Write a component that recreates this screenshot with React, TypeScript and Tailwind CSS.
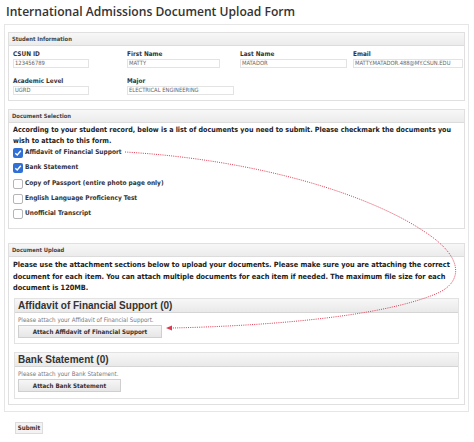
import React from 'react';

const body = { fontFamily: '"DejaVu Sans Condensed", "Liberation Sans", Verdana, sans-serif' };

const fields = [
  [
    { label: 'CSUN ID', value: '123456789', w: 'w-[76px]' },
    { label: 'First Name', value: 'MATTY', w: 'w-[93px]' },
    { label: 'Last Name', value: 'MATADOR', w: 'w-[107px]' },
    { label: 'Email', value: 'MATTY.MATADOR.488@MY.CSUN.EDU', w: 'w-[110px]' },
  ],
  [
    { label: 'Academic Level', value: 'UGRD', w: 'w-[76px]' },
    { label: 'Major', value: 'ELECTRICAL ENGINEERING', w: 'w-[107px]' },
  ],
];

const docs = [
  { name: 'Affidavit of Financial Support', checked: true },
  { name: 'Bank Statement', checked: true },
  { name: 'Copy of Passport (entire photo page only)', checked: false },
  { name: 'English Language Proficiency Test', checked: false },
  { name: 'Unofficial Transcript', checked: false },
];

const SectionHeader = ({ title }: { title: string }) => (
  <div className="h-[13px] flex items-center pl-[3px] bg-gradient-to-b from-[#f7f7f7] to-[#ececec] border-b border-[#dcdcdc] text-[5.8px] font-bold text-[#444]">
    {title}
  </div>
);

const Checkbox = ({ checked }: { checked: boolean }) =>
  checked ? (
    <div className="w-[10px] h-[10px] rounded-[2px] bg-[#2f6fd6] flex items-center justify-center shrink-0">
      <svg width="8" height="8" viewBox="0 0 8 8">
        <path d="M1.3 4.2 L3.2 6 L6.8 1.8" stroke="white" strokeWidth="1.4" fill="none" />
      </svg>
    </div>
  ) : (
    <div className="w-[10px] h-[10px] rounded-[2px] bg-white border border-[#b5b5b5] shrink-0" />
  );

const UploadBox = ({
  title,
  text,
  button,
  btnW,
  pb,
}: {
  title: string;
  text: string;
  button: string;
  btnW: string;
  pb: string;
}) => (
  <div className="border border-[#e2e2e2] mx-[5px]">
    <div
      className="h-[14px] flex items-center pl-[3px] bg-gradient-to-b from-[#f7f7f7] to-[#e9e9e9] border-b border-[#d5d5d5] text-[10px] font-bold text-[#333]"
      style={{ fontFamily: '"Liberation Sans", Arial, sans-serif' }}
    >
      {title}
    </div>
    <div className={`px-[3px] pt-[2px] ${pb}`}>
      <div className="text-[6.2px] text-[#777] leading-[9px]">{text}</div>
      <div
        className={`${btnW} h-[13px] mt-[1px] flex items-center justify-center bg-gradient-to-b from-[#f6f6f6] to-[#e6e6e6] border border-[#cfcfcf] text-[6.2px] font-bold text-[#333]`}
      >
        {button}
      </div>
    </div>
  </div>
);

export default function App() {
  return (
    <div className="relative w-[474px] h-[442px] bg-white overflow-hidden" style={body}>
      <h1
        className="pl-[6px] pt-[4px] h-[24px] text-[12.1px] font-semibold text-[#333] leading-[16px]"
        style={{ fontFamily: '"Open Sans", sans-serif' }}
      >
        International Admissions Document Upload Form
      </h1>

      <div className="mx-[4px] w-[465px] border border-[#e6e6e6] px-[3px] pt-[7px] pb-[6px] flex flex-col">
        {/* Student information */}
        <div className="border border-[#e0e0e0]">
          <SectionHeader title="Student Information" />
          <div className="pl-[4px] pt-[4px] pb-[5px] flex flex-col gap-[9px]">
            {fields.map((row, ri) => (
              <div key={ri} className="grid grid-cols-[114px_113px_113px_113px]">
                {row.map((f) => (
                  <div key={f.label} className="flex flex-col">
                    <div className="text-[6.4px] font-bold text-[#333] leading-[9px]">{f.label}</div>
                    <div
                      className={`${f.w} h-[9px] border border-[#e3e3e3] pl-[1px] text-[5.8px] text-[#666] leading-[7px] whitespace-nowrap overflow-hidden`}
                    >
                      {f.value}
                    </div>
                  </div>
                ))}
              </div>
            ))}
          </div>
        </div>

        {/* Document selection */}
        <div className="border border-[#e0e0e0] mt-[8px]">
          <SectionHeader title="Document Selection" />
          <div className="pl-[4px] pr-[2px] pt-[1px] pb-[9px]">
            <p className="text-[7.1px] font-bold text-[#222] leading-[11px]">
              According to your student record, below is a list of documents you need to submit. Please checkmark the documents you wish to attach to this form.
            </p>
            <div className="mt-[2px] flex flex-col gap-[5.3px]">
              {docs.map((d) => (
                <div key={d.name} className="flex items-center gap-[2px] h-[10px]">
                  <Checkbox checked={d.checked} />
                  <span className="text-[6.5px] font-bold text-[#333]">{d.name}</span>
                </div>
              ))}
            </div>
          </div>
        </div>

        {/* Document upload */}
        <div className="border border-[#e0e0e0] mt-[14px]">
          <SectionHeader title="Document Upload" />
          <div className="pt-[2px] pb-[5px]">
            <p className="pl-[4px] pr-[8px] text-[7.3px] font-bold text-[#222] leading-[11.5px]">
              Please use the attachment sections below to upload your documents. Please make sure you are attaching the correct document for each item. You can attach multiple documents for each item if needed. The maximum file size for each document is 120MB.
            </p>
            <div className="mt-[4px] flex flex-col gap-[8px]">
              <UploadBox
                title="Affidavit of Financial Support (0)"
                text="Please attach your Affidavit of Financial Support."
                button="Attach Affidavit of Financial Support"
                btnW="w-[144px]"
                pb="pb-[5px]"
              />
              <UploadBox
                title="Bank Statement (0)"
                text="Please attach your Bank Statement."
                button="Attach Bank Statement"
                btnW="w-[103px]"
                pb="pb-[6px]"
              />
            </div>
          </div>
        </div>
      </div>

      <div className="ml-[15px] mt-[10px] w-[28px] h-[12px] flex items-center justify-center bg-[#f3f3f3] border border-[#dcdcdc] text-[6.2px] font-bold text-[#333]">
        Submit
      </div>

      <svg className="absolute left-0 top-0 pointer-events-none" width="474" height="442" viewBox="0 0 474 442">
        <path
          d="M125 152 C 260 160 370 195 425 232 C 465 258 462 282 438 293 C 380 318 260 326 172 328"
          fill="none"
          stroke="#e0374f"
          strokeWidth="1"
          strokeDasharray="1 1.2"
        />
        <path d="M166 328 L172 325.5 L172 330.5 Z" fill="#e0374f" />
      </svg>
    </div>
  );
}
